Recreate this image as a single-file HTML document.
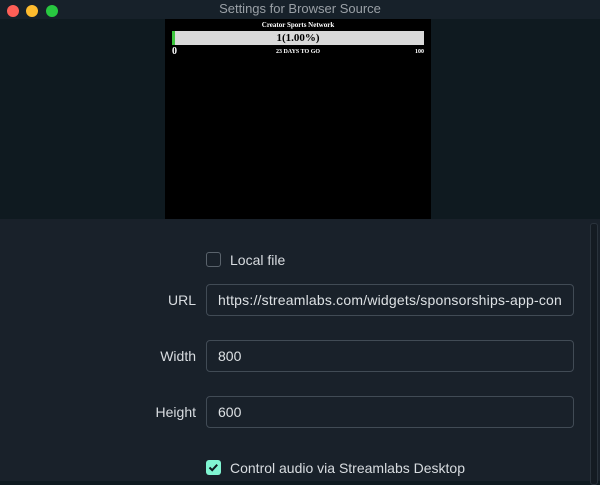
<!DOCTYPE html>
<html><head><style>
body{margin:0;width:600px;height:481px;overflow:hidden;background:#0f1a20;font-family:"Liberation Sans",sans-serif;position:relative}
.tb{position:absolute;left:0;top:0;width:600px;height:19px;background:#17212a;color:#9aa0a6;font-size:13px;text-align:center;line-height:18px}
.dot{position:absolute;top:5px;width:12px;height:12px;border-radius:50%}
.prev{position:absolute;left:165px;top:19px;width:266px;height:200px;background:#000;font-family:"Liberation Serif",serif;font-weight:bold;color:#fff}
.panel{position:absolute;left:0;top:219px;width:600px;height:262px;background:#19212a}
.lbl{position:absolute;color:#d8dce0;font-size:14px;text-align:right;width:60px;left:136px}
.inp{position:absolute;left:206px;width:368px;border:1px solid #414b55;border-radius:4px;color:#dde1e4;font-size:14px;line-height:30px;padding-left:11px;box-sizing:border-box;height:32px;white-space:nowrap;overflow:hidden}
.cb{position:absolute;left:206px;width:15px;height:15px;border-radius:3px;box-sizing:border-box}
.ct{position:absolute;left:230px;color:#d8dce0;font-size:14px}
</style></head><body>
<div class="tb">Settings for Browser Source
<div class="dot" style="left:7px;background:#fe5f57"></div>
<div class="dot" style="left:26px;background:#febc2e"></div>
<div class="dot" style="left:46px;background:#28c840"></div>
</div>
<div class="prev">
<div style="position:absolute;top:2px;width:100%;text-align:center;font-size:7px">Creator Sports Network</div>
<div style="position:absolute;left:7px;top:12px;width:252px;height:14px;background:#d9d9d9;text-align:center;color:#000;font-size:11px;line-height:14px">1(1.00%)<div style="position:absolute;left:0;top:0;width:3px;height:14px;background:#3dc63d"></div></div>
<div style="position:absolute;left:7px;top:27px;font-size:10px">0</div>
<div style="position:absolute;top:30px;width:100%;text-align:center;font-size:6px">23 DAYS TO GO</div>
<div style="position:absolute;right:7px;top:30px;font-size:6px">100</div>
</div>
<div class="panel">
<div style="position:absolute;left:590px;top:4px;width:6px;height:260px;border:1px solid #2a333c;border-radius:3px;background:#141b22"></div>
</div>
<div class="cb" style="top:252px;border:1px solid #5a636c"></div>
<div class="ct" style="top:252px">Local file</div>
<div class="lbl" style="top:292px">URL</div>
<div class="inp" style="top:284px;letter-spacing:0.2px">https://streamlabs.com/widgets/sponsorships-app-con</div>
<div class="lbl" style="top:348px">Width</div>
<div class="inp" style="top:340px">800</div>
<div class="lbl" style="top:404px">Height</div>
<div class="inp" style="top:396px">600</div>
<div class="cb" style="top:460px;background:#80f5d2"><svg width="15" height="15" viewBox="0 0 15 15"><path d="M3.5 7.5l2.7 2.7 5-5.5" stroke="#0f1a20" stroke-width="2" fill="none"/></svg></div>
<div class="ct" style="top:460px">Control audio via Streamlabs Desktop</div>
</body></html>
